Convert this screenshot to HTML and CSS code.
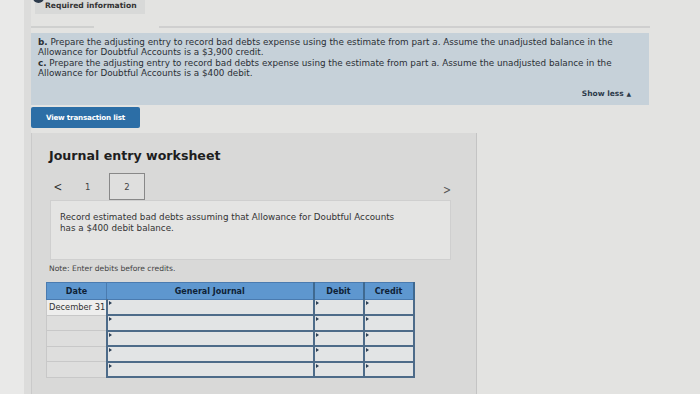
FILE: index.html
```html
<!DOCTYPE html>
<html lang="en">
    <head>
        <meta charset="UTF-8">
        <meta name="viewport" content="width=device-width, initial-scale=1.0">
        <title>Journal entry worksheet</title>
        <link rel="stylesheet" href="styles.css">
    </head>
    <body>
        <div class="page">
            <div class="tabs">
                <div class="tab"><span class="dot"></span>Required information</div>
            </div>
            <div class="rule"></div>
            <div class="question">
                <p><b>b.</b> Prepare the adjusting entry to record bad debts expense using the estimate from part <i>a</i>. Assume the unadjusted balance in the Allowance for Doubtful Accounts is a $3,900 credit.</p>
                <p><b>c.</b> Prepare the adjusting entry to record bad debts expense using the estimate from part a. Assume the unadjusted balance in the Allowance for Doubtful Accounts is a $400 debit.</p>
                <div class="show-less">Show less <span class="tri">&#9650;</span></div>
            </div>
            <button class="view-btn">View transaction list</button>
            <div class="worksheet">
                <h2 class="title">Journal entry worksheet</h2>
                <div class="nav">
                    <span class="arrow">&lt;</span>
                    <span class="step">1</span>
                    <span class="step current">2</span>
                    <span class="arrow next">&gt;</span>
                </div>
                <div class="desc">
                    Record estimated bad debts assuming that Allowance for Doubtful Accounts<br>
                    has a $400 debit balance.
                </div>
                <p class="note">Note: Enter debits before credits.</p>
                <table class="journal">
                    <thead>
                        <tr>
                            <th class="c-date">Date</th>
                            <th class="c-acct">General Journal</th>
                            <th class="c-num">Debit</th>
                            <th class="c-num">Credit</th>
                        </tr>
                    </thead>
                    <tbody>
                        <tr>
                            <td class="date filled">December 31</td>
                            <td class="input"></td>
                            <td class="input"></td>
                            <td class="input"></td>
                        </tr>
                        <tr><td class="date"></td><td class="input"></td><td class="input"></td><td class="input"></td></tr>
                        <tr><td class="date"></td><td class="input"></td><td class="input"></td><td class="input"></td></tr>
                        <tr><td class="date"></td><td class="input"></td><td class="input"></td><td class="input"></td></tr>
                        <tr><td class="date"></td><td class="input"></td><td class="input"></td><td class="input"></td></tr>
                    </tbody>
                </table>
            </div>
        </div>
    </body>
</html>
```

FILE: styles.css
```css
:root {
    --bg:      #e3e3e1; /* page */
    --strip:   #e9e9e8; /* left strip */
    --q-bg:    #c6d1d9; /* question box */
    --panel:   #d9d9d8; /* worksheet */
    --desc:    #e4e4e3;
    --btn:     #2c6ea6;
    --head:    #5e97cf;
    --line:    #4d6b89;
    --text:    #2b2b2b;
}
* {
    box-sizing: border-box;
}
body {
    margin: 0px;
    background: var(--bg);
    font-family: "DejaVu Sans", Verdana, sans-serif;
    color: var(--text);
    height: 394px;
    overflow: hidden;
}
.page {
    padding-left: 31px;
    background: linear-gradient(to right, var(--strip) 0px, var(--strip) 24px, #dcdcdb 24px, #dcdcdb 31px, transparent 31px);
    min-height: 394px;
}
/* #region top */
.tabs {
    display: flex;
    padding-left: 4px;
    height: 14px;
}
.tab {
    position: relative;
    background: #d8d9d8;
    width: 110px;
    height: 14px;
    padding: 1px 0 0 10px;
    font-size: 7.6px;
    font-weight: bold;
    color: #333;
}
.tab > .dot {
    position: absolute;
    left: -2px;
    top: -7px;
    width: 11px;
    height: 10px;
    border-radius: 50%;
    background: #2d3b4c;
}
.rule {
    height: 19px;
    margin-right: 50px;
    background: linear-gradient(to right, #cfd0cf 0px, #cfd0cf 63px, transparent 63px, transparent 128px, #cfcfcf 128px) no-repeat 0 12px / 100% 2px;
}
.question {
    width: 618px;
    height: 72px;
    background: var(--q-bg);
    padding: 4px 10px 0 7px;
    font-size: 8.8px;
    line-height: 10.3px;
    color: #2a2f35;
}
.question > p {
    margin: 0px;
}
.show-less {
    text-align: right;
    font-size: 7.5px;
    line-height: 9px;
    font-weight: bold;
    margin-top: 11px;
    padding-right: 8px;
    color: #2c3a4a;
}
.show-less > .tri {
    font-size: 6px;
}
.view-btn {
    display: block;
    margin-top: 2px;
    width: 109px;
    height: 21px;
    border: 0px;
    border-radius: 2px;
    background: var(--btn);
    color: #fff;
    font-family: inherit;
    font-weight: bold;
    font-size: 7.2px;
    letter-spacing: -0.2px;
    padding: 0px;
}
/* #endregion top */
/* #region worksheet */
.worksheet {
    margin-top: 5px;
    width: 446px;
    height: 261px;
    background: var(--panel);
    border-left: 1px solid #cacaca;
    border-right: 1px solid #c4c4c4;
    padding: 15px 0 0 17px;
}
.title {
    margin: 0px;
    font-size: 12.6px;
    line-height: 16px;
    font-weight: bold;
    color: #1e1e1e;
}
.nav {
    display: flex;
    align-items: center;
    margin-top: 9px;
    height: 27px;
}
.nav > .arrow {
    font-size: 13px;
    color: #333;
    width: 36px;
    padding-left: 1px;
    transform: scaleX(0.8);
}
.nav > .arrow.next {
    margin-left: auto;
    margin-right: 24px;
    margin-top: 6px;
    width: auto;
    font-size: 12px;
    color: #555;
}
.nav > .step {
    font-size: 8.5px;
    width: 24px;
    color: #444;
}
.nav > .step.current {
    width: 36px;
    height: 27px;
    border: 1px dotted #555;
    outline: 1px solid #888;
    outline-offset: -1px;
    display: flex;
    align-items: center;
    justify-content: center;
    background: #dfdfde;
}
.desc {
    width: 401px;
    height: 60px;
    margin-left: 1px;
    background: var(--desc);
    border: 1px solid #cfcfcf;
    padding: 11px 0 0 9px;
    font-size: 8.75px;
    line-height: 11px;
    color: #333;
}
.note {
    margin: 4px 0 0 0;
    font-size: 7.6px;
    color: #444;
    height: 18px;
}
/* #endregion worksheet */
/* #region table */
.journal {
    margin-left: -3px;
    border-collapse: collapse;
    table-layout: fixed;
    width: 368px;
    font-size: 8px;
}
.journal th {
    background: var(--head);
    color: #0f2236;
    height: 17px;
    padding: 0px;
    border: 1px solid #4a7bb0;
    border-right: 2px solid #3f6990;
    font-weight: bold;
}
.journal th.c-date { width: 60px; border-right: 1px solid #4a7bb0; }
.journal th.c-acct { width: 207px; }
.journal th.c-num  { width: 50px; }
.journal td {
    height: 15.5px;
    padding: 0px;
}
.journal td.date {
    background: #dededd;
    border: 1px solid #c8c8c8;
}
.journal td.date.filled {
    background: #eeeeed;
    padding-left: 2px;
    color: #333;
    font-size: 8.3px;
    white-space: nowrap;
}
.journal td.input {
    position: relative;
    background: #e2e4e5;
    border: 2px solid var(--line);
    border-top-width: 1px;
}
.journal td.input::before {
    content: "";
    position: absolute;
    top: 1px;
    left: 1px;
    border-left: 3px solid #2b3f55;
    border-top: 2px solid transparent;
    border-bottom: 2px solid transparent;
}
/* #endregion table */
```
